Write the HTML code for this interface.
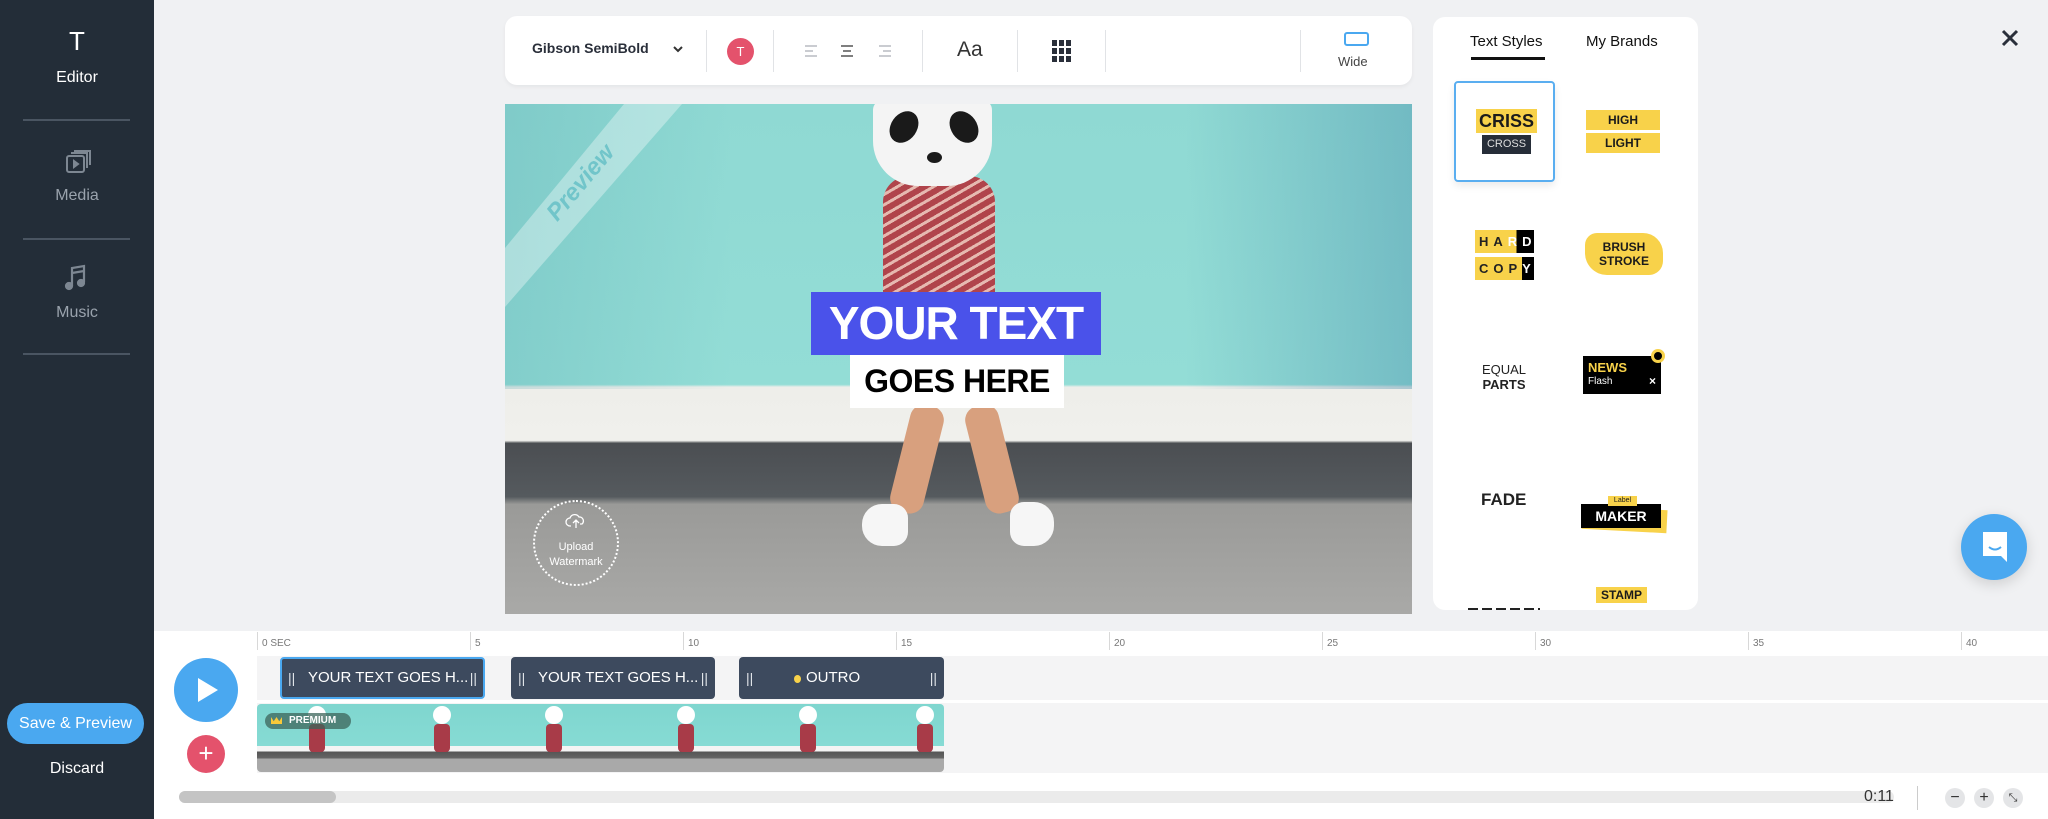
<!DOCTYPE html>
<html><head><meta charset="utf-8"><style>
*{box-sizing:border-box;margin:0;padding:0}
body{width:2048px;height:819px;overflow:hidden;background:#f0f1f3;font-family:"Liberation Sans",sans-serif;position:relative}
.abs{position:absolute}
.side{left:0;top:0;width:154px;height:819px;background:#232d38}
.sl{color:#fff;font-size:16px;text-align:center;width:154px;left:0}
.div{left:23px;width:107px;height:2px;background:#4a5562}
.tb{left:505px;top:16px;width:907px;height:69px;background:#fff;border-radius:12px;box-shadow:0 2px 4px rgba(0,0,0,.05)}
.sep{top:14px;width:1px;height:42px;background:#e1e3e6}
.panel{left:1433px;top:17px;width:265px;height:593px;background:#fff;border-radius:12px;overflow:hidden}
.y{background:#f8d24a;color:#1b1b1b;font-weight:bold;text-align:center}
.clip{top:657px;height:42px;background:#3d4a5e;border-radius:4px;color:#fff;font-size:15px;line-height:42px}
.clip .h{position:absolute;top:0;font-size:14px;color:#dfe3e8}
.rl{top:638px;font-size:10px;color:#777}
.tk{top:632px;width:1px;height:18px;background:#d8d8d8}
.frame{top:704px;height:68px;width:122px;overflow:hidden;background:linear-gradient(#7fd6cf 0,#86dbd4 62%,#f4f4f4 62%,#f4f4f4 70%,#555 70%,#666 80%,#a9a9a9 80%)}
.fig{position:absolute;width:16px;height:28px;background:#a83b48;top:20px;border-radius:4px}
.fig:before{content:"";position:absolute;left:-1px;top:-18px;width:18px;height:18px;border-radius:50%;background:#fff}
.zb{top:788px;width:20px;height:20px;border-radius:50%;background:#e4e5e7;color:#333;font-size:16px;text-align:center;line-height:20px}
</style></head><body>

<div class="abs side"></div>
<div class="abs sl" style="top:26px;font-size:26px;font-weight:normal">T</div>
<div class="abs sl" style="top:69px">Editor</div>
<div class="abs div" style="top:119px"></div>
<svg class="abs" style="left:64px;top:148px" width="28" height="28" viewBox="0 0 28 28" fill="none" stroke="#7d8792" stroke-width="2"><rect x="3" y="8" width="17" height="16" rx="2"/><path d="M7 5h16v15M10 3h16v14"/><path d="M10 13l4 3-4 3z" fill="#7d8792"/></svg>
<div class="abs sl" style="top:187px;color:#9aa3ad">Media</div>
<div class="abs div" style="top:238px"></div>
<svg class="abs" style="left:64px;top:264px" width="26" height="28" viewBox="0 0 26 28" fill="none" stroke="#7d8792" stroke-width="2.2"><path d="M8 22V4l12-2v16M8 9l12-2"/><circle cx="5" cy="22" r="3" fill="#7d8792"/><circle cx="17" cy="19" r="3" fill="#7d8792"/></svg>
<div class="abs sl" style="top:304px;color:#9aa3ad">Music</div>
<div class="abs div" style="top:353px"></div>
<div class="abs" style="left:7px;top:703px;width:137px;height:41px;border-radius:21px;background:#4aa8f0;color:#fff;font-size:16px;text-align:center;line-height:41px">Save &amp; Preview</div>
<div class="abs sl" style="top:760px">Discard</div>

<!-- toolbar -->
<div class="abs tb">
 <div class="abs" style="left:27px;top:24px;font-size:14px;font-weight:bold;color:#2a2f3a">Gibson SemiBold</div>
 <svg class="abs" style="left:167px;top:29px" width="12" height="10"><path d="M2 2l4 4 4-4" stroke="#333" stroke-width="2" fill="none"/></svg>
 <div class="abs sep" style="left:201px"></div>
 <div class="abs" style="left:222px;top:22px;width:27px;height:27px;border-radius:50%;background:#e4526c;color:#fff;font-size:13px;text-align:center;line-height:27px">T</div>
 <div class="abs sep" style="left:268px"></div>
 <svg class="abs" style="left:298px;top:27px" width="90" height="16" stroke-width="1.4"><g stroke="#b9bcc2"><path d="M2 3h12M2 8h8M2 13h12"/><path d="M76 3h12M80 8h8M76 13h12"/></g><g stroke="#555"><path d="M38 3h12M40 8h8M38 13h12"/></g></svg>
 <div class="abs sep" style="left:417px"></div>
 <div class="abs" style="left:452px;top:22px;font-size:21px;color:#333">Aa</div>
 <div class="abs sep" style="left:512px"></div>
 <svg class="abs" style="left:547px;top:24px" width="20" height="22" fill="#2a2f3a"><rect x="0" y="0" width="5" height="6"/><rect x="7" y="0" width="5" height="6"/><rect x="14" y="0" width="5" height="6"/><rect x="0" y="8" width="5" height="6"/><rect x="7" y="8" width="5" height="6"/><rect x="14" y="8" width="5" height="6"/><rect x="0" y="16" width="5" height="6"/><rect x="7" y="16" width="5" height="6"/><rect x="14" y="16" width="5" height="6"/></svg>
 <div class="abs sep" style="left:600px"></div>
 <div class="abs sep" style="left:795px"></div>
 <div class="abs" style="left:839px;top:16px;width:25px;height:14px;border:2px solid #4aa8f0;border-radius:3px"></div>
 <div class="abs" style="left:833px;top:38px;font-size:13px;color:#444">Wide</div>
</div>

<!-- video -->
<div class="abs" style="left:505px;top:104px;width:907px;height:510px;overflow:hidden;background:linear-gradient(#8fd9d3 0,#93ddd6 55%,#eeeeea 55.5%,#f0f0ec 66%,#4b4e52 66.5%,#555a5e 77%,#9a9a98 78.5%,#a9a9a7 100%)">
 <div class="abs" style="left:0;top:0;width:907px;height:285px;background:linear-gradient(90deg,rgba(80,160,170,.25),transparent 25%,transparent 75%,rgba(70,140,170,.4))"></div>
 <!-- preview ribbon -->
 <div class="abs" style="left:0;top:0;width:300px;height:300px;background:rgba(255,255,255,.35);clip-path:polygon(119px 0,177px 0,0 203px,0 144px)"></div>
 <div class="abs" style="left:16px;top:62px;width:120px;height:34px;transform:rotate(-50deg);color:rgba(110,195,200,.95);font-size:24px;font-weight:bold;font-style:italic;text-align:center;line-height:34px">Preview</div>
 <!-- figure -->
 <div class="abs" style="left:378px;top:72px;width:112px;height:220px;border-radius:26px 26px 10px 10px;background:repeating-linear-gradient(150deg,#b0444b 0,#b0444b 6px,#e6b9b0 6px,#e6b9b0 9px)"></div>
 <div class="abs" style="left:368px;top:-4px;width:119px;height:86px;border-radius:10px 10px 45px 45px;background:#f4f4f4"></div>
 <div class="abs" style="left:386px;top:6px;width:26px;height:34px;border-radius:50%;background:#1a1a1a;transform:rotate(35deg)"></div>
 <div class="abs" style="left:446px;top:6px;width:26px;height:34px;border-radius:50%;background:#1a1a1a;transform:rotate(-35deg)"></div>
 <div class="abs" style="left:422px;top:48px;width:15px;height:11px;border-radius:50%;background:#1a1a1a"></div>
 <div class="abs" style="left:395px;top:300px;width:34px;height:110px;background:#d8a07e;transform:rotate(14deg);border-radius:14px"></div>
 <div class="abs" style="left:470px;top:300px;width:34px;height:110px;background:#d8a07e;transform:rotate(-14deg);border-radius:14px"></div>
 <div class="abs" style="left:357px;top:400px;width:46px;height:42px;background:#f6f6f6;border-radius:20px 14px 14px 20px"></div>
 <div class="abs" style="left:505px;top:398px;width:44px;height:44px;background:#f6f6f6;border-radius:14px 20px 20px 14px"></div>
 <!-- text -->
 <div class="abs" style="left:306px;top:188px;width:290px;height:63px;background:#4a52ea;color:#fff;font-weight:900;font-size:46px;text-align:center;line-height:63px;letter-spacing:-1px">YOUR TEXT</div>
 <div class="abs" style="left:345px;top:251px;width:214px;height:53px;background:#fff;color:#000;font-weight:900;font-size:32px;text-align:center;line-height:53px;letter-spacing:-.5px">GOES HERE</div>
 <!-- watermark -->
 <div class="abs" style="left:28px;top:396px;width:86px;height:86px;border-radius:50%;border:2px dotted #fff;color:#fff;font-size:11px;text-align:center;padding-top:38px;line-height:15px">Upload<br>Watermark</div>
 <svg class="abs" style="left:60px;top:408px" width="22" height="18" fill="none" stroke="#fff" stroke-width="1.3"><path d="M6 14H5a4 4 0 010-8 5 5 0 019-1 4 4 0 013 7h-2M11 16V9M8 11l3-3 3 3"/></svg>
</div>

<!-- right panel -->
<div class="abs panel">
 <div class="abs" style="left:37px;top:16px;font-size:15px;color:#111">Text Styles</div>
 <div class="abs" style="left:38px;top:40px;width:74px;height:3px;background:#111"></div>
 <div class="abs" style="left:153px;top:16px;font-size:15px;color:#111">My Brands</div>
 <div class="abs" style="left:21px;top:64px;width:101px;height:101px;border:2px solid #5aaef0;border-radius:4px;box-shadow:0 4px 8px rgba(0,0,0,.08)"></div>
 <div class="abs y" style="left:43px;top:92px;width:61px;height:24px;font-size:18px;line-height:24px">CRISS</div>
 <div class="abs" style="left:49px;top:118px;width:49px;height:19px;background:#262d38;color:#ddd;font-size:11px;text-align:center;line-height:19px">CROSS</div>
 <div class="abs y" style="left:153px;top:93px;width:74px;height:20px;font-size:12px;line-height:20px">HIGH</div>
 <div class="abs y" style="left:153px;top:116px;width:74px;height:20px;font-size:12px;line-height:20px">LIGHT</div>
 <div class="abs" style="left:42px;top:213px;width:59px;height:23px;background:linear-gradient(90deg,#f8d24a 70%,#000 70%);font-weight:bold;font-size:13px;letter-spacing:5px;line-height:23px;padding-left:4px;color:#222">HA<span style="color:#fff">RD</span></div>
 <div class="abs" style="left:42px;top:240px;width:59px;height:23px;background:linear-gradient(90deg,#f8d24a 80%,#000 80%);font-weight:bold;font-size:13px;letter-spacing:5px;line-height:23px;padding-left:4px;color:#222">COP<span style="color:#fff">Y</span></div>
 <div class="abs y" style="left:152px;top:216px;width:78px;height:42px;border-radius:12px 20px 14px 22px;font-size:12px;line-height:14px;padding-top:7px">BRUSH<br>STROKE</div>
 <div class="abs" style="left:40px;top:345px;width:62px;text-align:center;font-size:13px;color:#222;line-height:15px">EQUAL<br><b>PARTS</b></div>
 <div class="abs" style="left:150px;top:339px;width:78px;height:38px;background:#000;color:#fff"><div class="abs" style="left:5px;top:4px;color:#f8d24a;font-weight:bold;font-size:13px">NEWS</div><div class="abs" style="left:5px;top:20px;font-size:10px">Flash</div><div class="abs" style="left:66px;top:18px;font-size:12px;font-weight:bold">×</div></div>
 <div class="abs" style="left:218px;top:332px;width:14px;height:14px;border-radius:50%;border:3px solid #f8d24a;background:#000"></div>
 <div class="abs" style="left:48px;top:473px;font-size:17px;font-weight:bold;color:#222">FADE</div>
 <div class="abs" style="left:149px;top:491px;width:85px;height:23px;background:#f8d24a;transform:rotate(3deg)"></div>
 <div class="abs" style="left:148px;top:487px;width:80px;height:24px;background:#000;color:#fff;font-weight:bold;font-size:14px;text-align:center;line-height:24px">MAKER</div>
 <div class="abs y" style="left:175px;top:479px;width:29px;height:10px;font-size:7px;line-height:10px;font-weight:normal">Label</div>
 <div class="abs y" style="left:163px;top:570px;width:51px;height:16px;font-size:12px;line-height:16px">STAMP</div>
 <div class="abs" style="left:35px;top:587px;width:72px;height:8px;background:repeating-linear-gradient(90deg,#222 0,#222 10px,transparent 10px,transparent 14px);clip-path:inset(4px 0 0 0)"></div>
</div>

<!-- close -->
<svg class="abs" style="left:2001px;top:29px" width="18" height="18"><path d="M2 2l14 14M16 2L2 16" stroke="#2a2f3a" stroke-width="3"/></svg>
<!-- chat -->
<div class="abs" style="left:1961px;top:514px;width:66px;height:66px;border-radius:50%;background:#4aa8f0;box-shadow:0 4px 14px rgba(0,0,0,.15)"></div>
<svg class="abs" style="left:1980px;top:530px" width="30" height="34"><path d="M3 2h24v30l-6-6H3z" fill="#fff"/><path d="M9 17q6 5 12 0" stroke="#4aa8f0" stroke-width="2" fill="none"/></svg>

<!-- timeline -->
<div class="abs" style="left:154px;top:631px;width:1894px;height:188px;background:#fff"></div>
<div class="abs" style="left:257px;top:656px;width:1791px;height:44px;background:#f4f4f5"></div>
<div class="abs" style="left:257px;top:703px;width:1791px;height:70px;background:#f4f4f5"></div>
<div class="abs tk" style="left:257px"></div><div class="abs rl" style="left:262px">0 SEC</div>
<div class="abs tk" style="left:470px"></div><div class="abs rl" style="left:475px">5</div>
<div class="abs tk" style="left:683px"></div><div class="abs rl" style="left:688px">10</div>
<div class="abs tk" style="left:896px"></div><div class="abs rl" style="left:901px">15</div>
<div class="abs tk" style="left:1109px"></div><div class="abs rl" style="left:1114px">20</div>
<div class="abs tk" style="left:1322px"></div><div class="abs rl" style="left:1327px">25</div>
<div class="abs tk" style="left:1535px"></div><div class="abs rl" style="left:1540px">30</div>
<div class="abs tk" style="left:1748px"></div><div class="abs rl" style="left:1753px">35</div>
<div class="abs tk" style="left:1961px"></div><div class="abs rl" style="left:1966px">40</div>

<div class="abs clip" style="left:280px;width:205px;border:2px solid #4aa8f0;line-height:38px"><span class="h" style="left:6px">||</span><span style="position:absolute;left:26px">YOUR TEXT GOES H...</span><span class="h" style="right:6px">||</span></div>
<div class="abs clip" style="left:511px;width:204px"><span class="h" style="left:7px">||</span><span style="position:absolute;left:27px">YOUR TEXT GOES H...</span><span class="h" style="right:7px">||</span></div>
<div class="abs clip" style="left:739px;width:205px"><span class="h" style="left:7px">||</span><span style="position:absolute;left:55px;top:18px;width:7px;height:8px;border-radius:50%;background:#f8d24a"></span><span style="position:absolute;left:67px">OUTRO</span><span class="h" style="right:7px">||</span></div>

<div class="abs" style="left:257px;top:704px;width:687px;height:68px;border-radius:4px;overflow:hidden">
 <div class="abs frame" style="left:0;top:0"><div class="fig" style="left:52px"></div></div>
 <div class="abs frame" style="left:122px;top:0"><div class="fig" style="left:55px"></div></div>
 <div class="abs frame" style="left:244px;top:0"><div class="fig" style="left:45px"></div></div>
 <div class="abs frame" style="left:366px;top:0"><div class="fig" style="left:55px"></div></div>
 <div class="abs frame" style="left:488px;top:0"><div class="fig" style="left:55px"></div></div>
 <div class="abs frame" style="left:610px;top:0"><div class="fig" style="left:50px"></div></div>
 <div class="abs" style="left:8px;top:9px;width:86px;height:16px;border-radius:8px;background:rgba(60,100,90,.75);color:#fff;font-size:10px;font-weight:bold;line-height:16px;padding-left:24px">PREMIUM</div>
 <div class="abs" style="left:14px;top:13px;width:11px;height:7px;background:#f8c93a;clip-path:polygon(0 0,25% 60%,50% 0,75% 60%,100% 0,100% 100%,0 100%)"></div>
</div>

<div class="abs" style="left:174px;top:658px;width:64px;height:64px;border-radius:50%;background:#4aa8f0"></div>
<svg class="abs" style="left:196px;top:676px" width="24" height="28"><path d="M2 2l20 12L2 26z" fill="#fff"/></svg>
<div class="abs" style="left:187px;top:735px;width:38px;height:38px;border-radius:50%;background:#e4526c;color:#fff;font-size:26px;text-align:center;line-height:37px">+</div>

<div class="abs" style="left:179px;top:791px;width:1715px;height:12px;border-radius:6px;background:#ebebeb"></div>
<div class="abs" style="left:179px;top:791px;width:157px;height:12px;border-radius:6px;background:#c4c4c4"></div>
<div class="abs" style="left:1864px;top:788px;font-size:16px;color:#333">0:11</div>
<div class="abs" style="left:1917px;top:786px;width:1px;height:24px;background:#ccc"></div>
<div class="abs zb" style="left:1945px">−</div>
<div class="abs zb" style="left:1974px">+</div>
<div class="abs zb" style="left:2003px;font-size:11px">⤡</div>
</body></html>
